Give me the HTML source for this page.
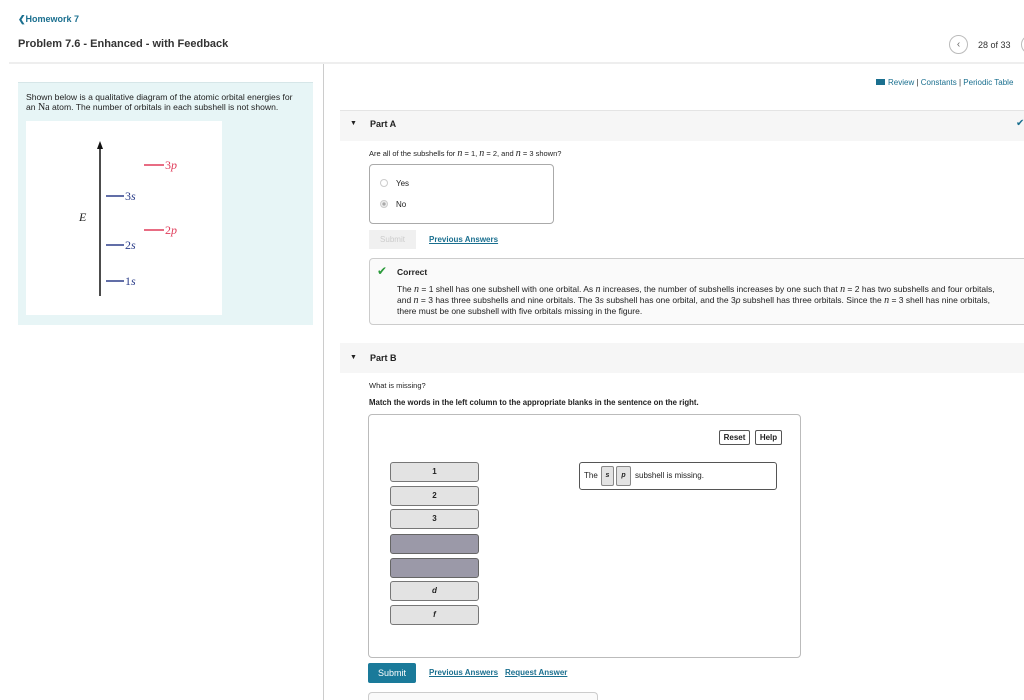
<!DOCTYPE html>
<html><head><meta charset="utf-8"><style>
*{box-sizing:border-box;margin:0;padding:0}
html,body{width:1024px;height:700px;overflow:hidden}
body{background:#fff;font-family:"Liberation Sans",Arial,sans-serif;color:#222;position:relative}
.a{position:absolute}
.lnk{color:#1a6f8f;font-weight:bold;text-decoration:underline;font-size:8px}
.tile{position:absolute;left:390px;width:89px;height:20px;border:1px solid #777;border-radius:3px;background:#e3e3e3;font-size:8px;font-weight:bold;text-align:center;line-height:18px}
.tile.g{background:#9b99a8;border-color:#666}
.m{font-family:"Liberation Serif",serif;font-style:italic;font-size:10px}
</style></head><body>
<div class="a" style="left:18px;top:14px;font-size:9px;font-weight:bold;color:#1a6f8f">&#10094;Homework 7</div>
<div class="a" style="left:18px;top:38px;font-size:11px;font-weight:bold;color:#333">Problem 7.6 - Enhanced - with Feedback</div>
<div class="a" style="left:949px;top:35px;width:19px;height:19px;border:1px solid #bbb;border-radius:50%;text-align:center;font-size:10px;line-height:17px;color:#666">&lsaquo;</div>
<div class="a" style="left:978px;top:40px;font-size:9px;color:#333">28 of 33</div>
<div class="a" style="left:1021px;top:35px;width:19px;height:19px;border:1px solid #bbb;border-radius:50%"></div>
<div class="a" style="left:9px;top:62px;width:1015px;height:2px;background:#eee"></div>
<div class="a" style="left:323px;top:64px;width:1px;height:636px;background:#ccc"></div>

<div class="a" style="left:18px;top:82px;width:295px;height:243px;background:#e7f5f6;border-top:1px solid #d6e6e8"></div>
<div class="a" style="left:26px;top:93px;width:290px;font-size:8.6px;line-height:9.5px;color:#222;white-space:nowrap">Shown below is a qualitative diagram of the atomic orbital energies for<br>an <span style="font-family:'Liberation Serif',serif;font-size:10px">Na</span> atom. The number of orbitals in each subshell is not shown.</div>
<div class="a" style="left:26px;top:121px;width:196px;height:194px;background:#fff"></div>
<svg class="a" style="left:26px;top:121px" width="196" height="194" viewBox="0 0 196 194">
<line x1="74" y1="25" x2="74" y2="175" stroke="#111" stroke-width="1.5"/>
<polygon points="74,20 71,28 77,28" fill="#111"/>
<g stroke-width="1.5"><line x1="80" y1="75" x2="98" y2="75" stroke="#2d3f8a"/><line x1="80" y1="124" x2="98" y2="124" stroke="#2d3f8a"/><line x1="80" y1="160" x2="98" y2="160" stroke="#2d3f8a"/>
<line x1="118" y1="44" x2="138" y2="44" stroke="#e03c5a"/><line x1="118" y1="109" x2="138" y2="109" stroke="#e03c5a"/></g>
<g font-family="Liberation Serif,serif" font-size="12">
<text x="99" y="79" fill="#2d3f8a">3<tspan font-style="italic">s</tspan></text>
<text x="99" y="128" fill="#2d3f8a">2<tspan font-style="italic">s</tspan></text>
<text x="99" y="164" fill="#2d3f8a">1<tspan font-style="italic">s</tspan></text>
<text x="139" y="48" fill="#e03c5a">3<tspan font-style="italic">p</tspan></text>
<text x="139" y="113" fill="#e03c5a">2<tspan font-style="italic">p</tspan></text>
<text x="53" y="100" font-style="italic" fill="#222">E</text></g>
</svg>

<div class="a" style="left:876px;top:78px;font-size:8px;color:#1a6f8f;white-space:nowrap"><span style="display:inline-block;width:9px;height:6px;background:#1a6f8f;margin-right:3px"></span>Review <span style="color:#333">|</span> Constants <span style="color:#333">|</span> Periodic Table</div>

<div class="a" style="left:340px;top:110px;width:684px;height:31px;background:#f6f6f6;border-top:1px solid #e4e4e4"></div>
<div class="a" style="left:350px;top:120px;font-size:7px">&#9660;</div>
<div class="a" style="left:370px;top:119px;font-size:9px;font-weight:bold">Part A</div>
<div class="a" style="left:1016px;top:118px;font-size:10px;color:#1a6f8f">&#10004;</div>
<div class="a" style="left:369px;top:148px;font-size:7.5px">Are all of the subshells for <span class="m">n</span> = 1, <span class="m">n</span> = 2, and <span class="m">n</span> = 3 shown?</div>
<div class="a" style="left:369px;top:164px;width:185px;height:60px;border:1px solid #aaa;border-radius:4px"></div>
<div class="a" style="left:380px;top:179px;width:8px;height:8px;border:1px solid #ccc;border-radius:50%"></div>
<div class="a" style="left:396px;top:179px;font-size:8px">Yes</div>
<div class="a" style="left:380px;top:200px;width:8px;height:8px;border:1px solid #ccc;border-radius:50%;background:radial-gradient(#aaa 35%,#eee 45%)"></div>
<div class="a" style="left:396px;top:200px;font-size:8px">No</div>
<div class="a" style="left:369px;top:230px;width:47px;height:19px;background:#f0f0f0;color:#ccc;font-size:8px;text-align:center;line-height:19px">Submit</div>
<div class="a lnk" style="left:429px;top:235px">Previous Answers</div>
<div class="a" style="left:369px;top:258px;width:660px;height:67px;border:1px solid #ccc;border-radius:4px;background:#fafafa"></div>
<div class="a" style="left:377px;top:264px;font-size:12px;color:#2a9a3a">&#10004;</div>
<div class="a" style="left:397px;top:267px;font-size:8.5px;font-weight:bold">Correct</div>
<div class="a" style="left:397px;top:284px;width:660px;font-size:8.5px;line-height:10px;white-space:nowrap">The <span class="m">n</span> = 1 shell has one subshell with one orbital. As <span class="m">n</span> increases, the number of subshells increases by one such that <span class="m">n</span> = 2 has two subshells and four orbitals,<br>and <span class="m">n</span> = 3 has three subshells and nine orbitals. The 3<i>s</i> subshell has one orbital, and the 3<i>p</i> subshell has three orbitals. Since the <span class="m">n</span> = 3 shell has nine orbitals,<br>there must be one subshell with five orbitals missing in the figure.</div>

<div class="a" style="left:340px;top:343px;width:684px;height:30px;background:#f6f6f6"></div>
<div class="a" style="left:350px;top:354px;font-size:7px">&#9660;</div>
<div class="a" style="left:370px;top:353px;font-size:9px;font-weight:bold">Part B</div>
<div class="a" style="left:369px;top:381px;font-size:7.5px">What is missing?</div>
<div class="a" style="left:369px;top:398px;font-size:7.8px;font-weight:bold">Match the words in the left column to the appropriate blanks in the sentence on the right.</div>
<div class="a" style="left:368px;top:414px;width:433px;height:244px;border:1px solid #bbb;border-radius:4px"></div>
<div class="a" style="left:719px;top:430px;width:31px;height:15px;border:1px solid #555;border-radius:2px;font-size:8px;font-weight:bold;text-align:center;line-height:13px">Reset</div>
<div class="a" style="left:755px;top:430px;width:27px;height:15px;border:1px solid #555;border-radius:2px;font-size:8px;font-weight:bold;text-align:center;line-height:13px">Help</div>
<div class="tile" style="top:462px">1</div>
<div class="tile" style="top:486px">2</div>
<div class="tile" style="top:509px">3</div>
<div class="tile g" style="top:534px"></div>
<div class="tile g" style="top:558px"></div>
<div class="tile" style="top:581px"><i>d</i></div>
<div class="tile" style="top:605px"><i>f</i></div>
<div class="a" style="left:579px;top:462px;width:198px;height:28px;border:1px solid #555;border-radius:3px"></div>
<div class="a" style="left:584px;top:471px;font-size:8px">The</div>
<div class="a" style="left:601px;top:466px;width:13px;height:20px;border:1px solid #888;border-radius:2px;background:#e3e3e3;font-size:7px;font-weight:bold;font-style:italic;text-align:center;line-height:18px">s</div>
<div class="a" style="left:616px;top:466px;width:15px;height:20px;border:1px solid #888;border-radius:2px;background:#e3e3e3;font-size:7px;font-weight:bold;font-style:italic;text-align:center;line-height:18px">p</div>
<div class="a" style="left:635px;top:471px;font-size:8px">subshell is missing.</div>
<div class="a" style="left:368px;top:663px;width:48px;height:20px;background:#1a7a9a;border-radius:2px;color:#fff;font-size:9px;text-align:center;line-height:20px">Submit</div>
<div class="a lnk" style="left:429px;top:668px">Previous Answers</div>
<div class="a lnk" style="left:505px;top:668px">Request Answer</div>
<div class="a" style="left:368px;top:692px;width:230px;height:8px;border:1px solid #ccc;border-bottom:none;border-radius:4px 4px 0 0;background:#fafafa"></div>
</body></html>
